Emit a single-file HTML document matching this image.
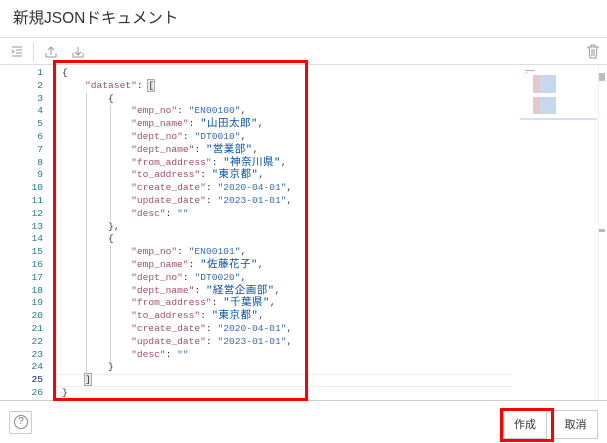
<!DOCTYPE html>
<html><head><meta charset="utf-8"><style>
*{margin:0;padding:0;box-sizing:border-box}
body{width:607px;height:443px;background:#fff;position:relative;overflow:hidden;font-family:"Liberation Sans","Noto Sans CJK JP",sans-serif;color:#333}
.abs{position:absolute}
.title{left:13px;top:6px;font-size:15.5px;color:#333}
.code{left:0;top:67px;font-family:"Liberation Mono","Noto Sans CJK JP",monospace;font-size:9.6px;line-height:12.8px}
.ln{position:absolute;left:0;width:43px;text-align:right;color:#237893}
.tx{position:absolute;left:62px;white-space:pre;color:#333}
.k{color:#a3506a}.s{color:#3a6db0}.j{color:#0451a5;letter-spacing:0.5px;font-size:10.5px}
.g{position:absolute;width:1px;background:#d0d0d0}
.btn{border:1px solid #ccc;background:#fff;font-size:11px;text-align:center;line-height:28px;color:#333}
</style></head><body>
<div class="abs title">新規JSONドキュメント</div>
<div class="abs" style="left:0;top:37px;width:607px;height:1px;background:#e0e0e0"></div>
<div class="abs" style="left:0;top:64px;width:607px;height:1px;background:#ddd"></div>
<div class="abs" style="left:33px;top:42px;width:1px;height:20px;background:#ddd"></div>
<svg class="abs" style="left:10px;top:44px" width="80" height="16" viewBox="0 0 80 16" fill="none" stroke="#999" stroke-width="1">
<path d="M2 3h10M6 6h6M6 9h6M2 12h10M2 6l2 1.5L2 9"/>
<path d="M36 9v4h10V9M41 11V3M38 6l3-3 3 3"/>
<path d="M63 9v4h10V9M68 3v8M65 8l3 3 3-3"/>
</svg>
<svg class="abs" style="left:586px;top:44px" width="14" height="15" viewBox="0 0 14 15" fill="none" stroke="#999" stroke-width="1"><path d="M1 3h12M5 3V1h4v2M3 3l1 11h6l1-11M6 5v7M8 5v7"/></svg>
<div class="abs" style="left:54px;top:374px;width:458px;height:13px;border-top:1px solid #eee;border-bottom:1px solid #eee"></div>
<div class="abs code">
<div class="g" style="left:86px;top:26px;height:281px"></div>
<div class="g" style="left:110px;top:38px;height:115px"></div>
<div class="g" style="left:110px;top:179px;height:115px"></div>
<div style="position:relative">
<span class="ln" style="top:0">1</span><span class="tx" style="top:0">{</span>
<span class="ln" style="top:12.8px">2</span><span class="tx" style="top:12.8px">    <span class="k">"dataset"</span>: <span style="background:#e8e8e8;outline:1px solid #aaa">[</span></span>
<span class="ln" style="top:25.6px">3</span><span class="tx" style="top:25.6px">        {</span>
<span class="ln" style="top:38.4px">4</span><span class="tx" style="top:38.4px">            <span class="k">"emp_no"</span>: <span class="s">"EN00100"</span>,</span>
<span class="ln" style="top:51.2px">5</span><span class="tx" style="top:51.2px">            <span class="k">"emp_name"</span>: <span class="j">"山田太郎"</span>,</span>
<span class="ln" style="top:64px">6</span><span class="tx" style="top:64px">            <span class="k">"dept_no"</span>: <span class="s">"DT0010"</span>,</span>
<span class="ln" style="top:76.8px">7</span><span class="tx" style="top:76.8px">            <span class="k">"dept_name"</span>: <span class="j">"営業部"</span>,</span>
<span class="ln" style="top:89.6px">8</span><span class="tx" style="top:89.6px">            <span class="k">"from_address"</span>: <span class="j">"神奈川県"</span>,</span>
<span class="ln" style="top:102.4px">9</span><span class="tx" style="top:102.4px">            <span class="k">"to_address"</span>: <span class="j">"東京都"</span>,</span>
<span class="ln" style="top:115.2px">10</span><span class="tx" style="top:115.2px">            <span class="k">"create_date"</span>: <span class="s">"2020-04-01"</span>,</span>
<span class="ln" style="top:128px">11</span><span class="tx" style="top:128px">            <span class="k">"update_date"</span>: <span class="s">"2023-01-01"</span>,</span>
<span class="ln" style="top:140.8px">12</span><span class="tx" style="top:140.8px">            <span class="k">"desc"</span>: <span class="s">""</span></span>
<span class="ln" style="top:153.6px">13</span><span class="tx" style="top:153.6px">        },</span>
<span class="ln" style="top:166.4px">14</span><span class="tx" style="top:166.4px">        {</span>
<span class="ln" style="top:179.2px">15</span><span class="tx" style="top:179.2px">            <span class="k">"emp_no"</span>: <span class="s">"EN00101"</span>,</span>
<span class="ln" style="top:192px">16</span><span class="tx" style="top:192px">            <span class="k">"emp_name"</span>: <span class="j">"佐藤花子"</span>,</span>
<span class="ln" style="top:204.8px">17</span><span class="tx" style="top:204.8px">            <span class="k">"dept_no"</span>: <span class="s">"DT0020"</span>,</span>
<span class="ln" style="top:217.6px">18</span><span class="tx" style="top:217.6px">            <span class="k">"dept_name"</span>: <span class="j">"経営企画部"</span>,</span>
<span class="ln" style="top:230.4px">19</span><span class="tx" style="top:230.4px">            <span class="k">"from_address"</span>: <span class="j">"千葉県"</span>,</span>
<span class="ln" style="top:243.2px">20</span><span class="tx" style="top:243.2px">            <span class="k">"to_address"</span>: <span class="j">"東京都"</span>,</span>
<span class="ln" style="top:256px">21</span><span class="tx" style="top:256px">            <span class="k">"create_date"</span>: <span class="s">"2020-04-01"</span>,</span>
<span class="ln" style="top:268.8px">22</span><span class="tx" style="top:268.8px">            <span class="k">"update_date"</span>: <span class="s">"2023-01-01"</span>,</span>
<span class="ln" style="top:281.6px">23</span><span class="tx" style="top:281.6px">            <span class="k">"desc"</span>: <span class="s">""</span></span>
<span class="ln" style="top:294.4px">24</span><span class="tx" style="top:294.4px">        }</span>
<span class="ln" style="top:307.2px;color:#0b216f">25</span><span class="tx" style="top:307.2px">    <span style="background:#e8e8e8;outline:1px solid #aaa">]</span><span style="border-left:1px solid #000"></span></span>
<span class="ln" style="top:320px">26</span><span class="tx" style="top:320px">}</span>
</div></div>
<svg class="abs" style="left:520px;top:66px" width="80" height="56">
<g fill="#d8a0a8"><rect x="5" y="4" width="10" height="1"/><rect x="6" y="6" width="1" height="1"/><rect x="13" y="9" width="7" height="18" opacity=".6"/><rect x="13" y="31" width="7" height="17" opacity=".6"/></g>
<g fill="#8fb0dc"><rect x="20" y="9" width="16" height="18" opacity=".5"/><rect x="20" y="31" width="16" height="17" opacity=".5"/></g>
<rect x="0" y="52" width="77" height="2" fill="#cfe3f8"/>
</svg>
<div class="abs" style="left:598px;top:66px;width:9px;height:334px;border-left:1px solid #eee"></div>
<div class="abs" style="left:599px;top:73px;width:6px;height:8px;background:#bbb"></div>
<div class="abs" style="left:599px;top:229px;width:6px;height:3px;background:#bbb"></div>
<div class="abs" style="left:0;top:400px;width:607px;height:1px;background:#ccc"></div>
<div class="abs" style="left:53px;top:60px;width:255px;height:341px;border:3px solid #f00"></div>
<div class="abs" style="left:9px;top:411px;width:23px;height:23px;border:1px solid #ccc;border-radius:2px"></div>
<div class="abs" style="left:14px;top:415px;width:14px;height:14px;border:1px solid #888;border-radius:50%;font-size:10px;line-height:12px;text-align:center;color:#777">?</div>
<div class="abs btn" style="left:503px;top:410px;width:44px;height:29px">作成</div>
<div class="abs btn" style="left:553px;top:410px;width:45px;height:29px">取消</div>
<div class="abs" style="left:500px;top:408px;width:54px;height:34px;border:3px solid #f00"></div>
</body></html>
